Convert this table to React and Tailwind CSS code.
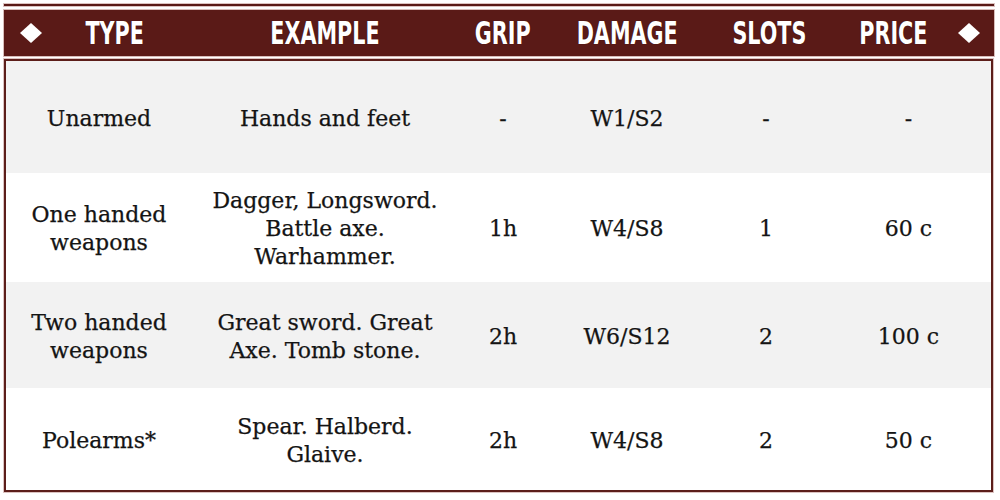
import React from "react";

const rows = [
  { type: ["Unarmed"], ex: ["Hands and feet"], grip: "-", dmg: "W1/S2", slots: "-", price: "-", h: "h-[112px]", bg: "bg-[#f2f2f2]" },
  { type: ["One handed", "weapons"], ex: ["Dagger, Longsword.", "Battle axe.", "Warhammer."], grip: "1h", dmg: "W4/S8", slots: "1", price: "60 c", h: "h-[109px]", bg: "bg-white" },
  { type: ["Two handed", "weapons"], ex: ["Great sword. Great", "Axe. Tomb stone."], grip: "2h", dmg: "W6/S12", slots: "2", price: "100 c", h: "h-[106px]", bg: "bg-[#f2f2f2]" },
  { type: ["Polearms*"], ex: ["Spear. Halberd.", "Glaive."], grip: "2h", dmg: "W4/S8", slots: "2", price: "50 c", h: "h-[102px]", bg: "bg-white" },
];

function Diamond() {
  return (
    <svg width="22" height="20" viewBox="0 0 22 20" className="shrink-0">
      <polygon points="11,0 22,10 11,20 0,10" fill="#ffffff" />
    </svg>
  );
}

function Lines({ lines }) {
  return (
    <div className="flex flex-col items-center">
      {lines.map((l, i) => (
        <span key={i} className="whitespace-nowrap">{l}</span>
      ))}
    </div>
  );
}

function Head({ children }) {
  return (
    <div className="flex items-center justify-center">
      <span className="inline-block scale-x-[0.72] text-white text-[32px] leading-none font-bold font-stretch-condensed [text-shadow:0_0_1px_#2a0705]">
        {children}
      </span>
    </div>
  );
}

export default function App() {
  const cell = "flex items-center justify-center text-center pt-[3px]";
  return (
    <div className="w-[1000px] h-[500px] bg-white px-[4px] pt-[4px]">
      <div className="w-[990px] h-[2px] bg-[#5a1a17] shadow-[0_0_0_1px_#dcc3c1]" />
      <div
        className="mt-[4px] w-[990px] h-[46px] bg-[#5a1a17] shadow-[0_0_0_1px_#d8bdba] flex items-center pl-[16px]"
        style={{ fontFamily: '"DejaVu Sans Condensed", "DejaVu Sans", sans-serif' }}
      >
        <Diamond />
        <div className="grid grid-cols-[146px_274px_82px_166px_118px_130px] h-full">
          <Head>TYPE</Head>
          <Head>EXAMPLE</Head>
          <Head>GRIP</Head>
          <Head>DAMAGE</Head>
          <Head>SLOTS</Head>
          <Head>PRICE</Head>
        </div>
        <Diamond />
      </div>
      <div
        className="mt-[3px] w-[989px] border-2 border-[#5c1e1a] shadow-[0_0_0_1px_#dcc3c1] text-[22px] leading-[28px] text-[#141414] [-webkit-text-stroke:0.25px_#141414]"
        style={{ fontFamily: '"DejaVu Serif", "Liberation Serif", serif' }}
      >
        {rows.map((r, i) => (
          <div key={i} className={`grid grid-cols-[186px_266px_90px_158px_120px_165px] ${r.h} ${r.bg}`}>
            <div className={cell}><Lines lines={r.type} /></div>
            <div className={cell}><Lines lines={r.ex} /></div>
            <div className={cell}>{r.grip}</div>
            <div className={cell}>{r.dmg}</div>
            <div className={cell}>{r.slots}</div>
            <div className={cell}>{r.price}</div>
          </div>
        ))}
      </div>
    </div>
  );
}
